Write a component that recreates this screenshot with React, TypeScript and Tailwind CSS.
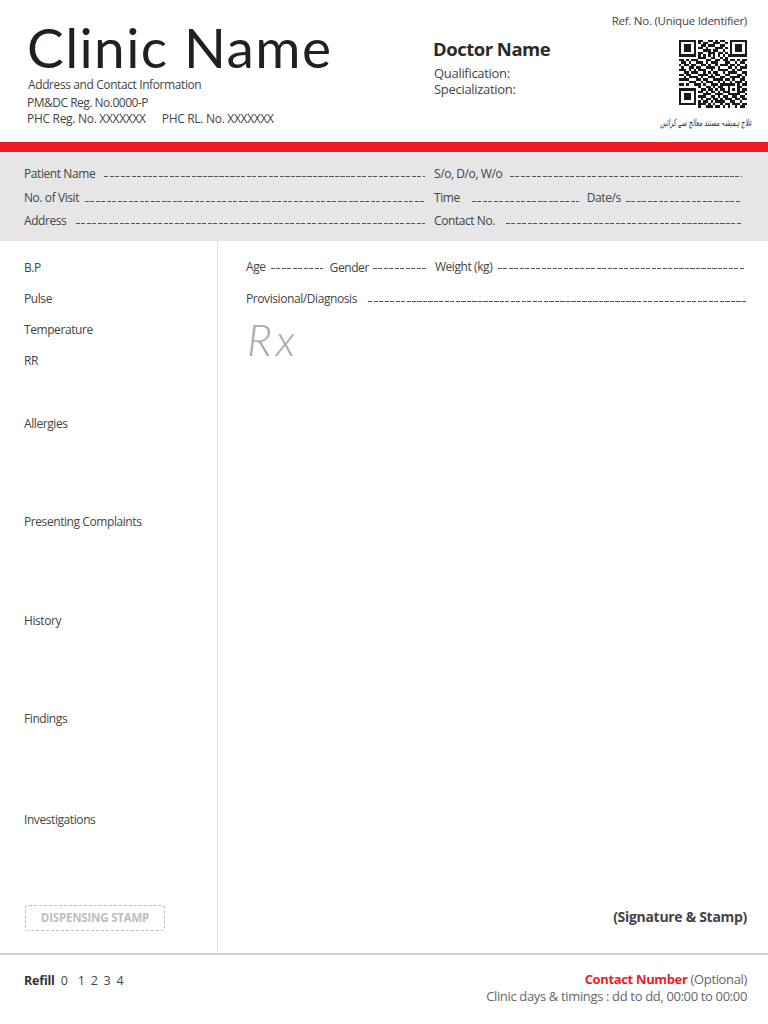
const QR = [
  "1111111011001101011001111111",
  "1000001010110011100101000001",
  "1011101001101110011001011101",
  "1011101011010001110101011101",
  "1011101000111011001001011101",
  "1000001011001110110101000001",
  "1111111010101010101011111111",
  "0000000011100110010100000000",
  "1101011100011001101101101011",
  "0110100111010111000110010110",
  "1011011001101001011101101001",
  "0100110110011110100011010111",
  "1110101011100100111100101100",
  "0011011100101011001011110011",
  "1101100011110101100110001101",
  "0010111101001110011001111010",
  "1111000110110011110110100110",
  "0000111001011100101001011101",
  "1101001110100111011111101011",
  "0000000010011010110010001100",
  "1111111001101101011010101011",
  "1000001011010110101110001110",
  "1011101000111001110011111001",
  "1011101011100110101100110110",
  "1011101001011011010111011011",
  "1000001010110101111001100100",
  "1111111011101010010110111011",
  "0000000010011101101010010110",
];

function QrCode() {
  return (
    <svg width="68" height="69" viewBox="0 0 28 28" shapeRendering="crispEdges" className="block">
      {QR.map((row, y) =>
        row.split("").map((c, x) =>
          c === "1" ? <rect key={`${x}-${y}`} x={x} y={y} width="1" height="1" fill="#1a1a1a" /> : null,
        ),
      )}
    </svg>
  );
}

function Line({ className = "" }: { className?: string }) {
  return (
    <div className={`h-px bg-[repeating-linear-gradient(90deg,#555_0,#555_4px,transparent_4px,transparent_5.5px)] ${className}`} />
  );
}

function Label({ children, className = "" }: { children: React.ReactNode; className?: string }) {
  return <span className={`text-[12px] leading-[16px] tracking-[-0.42px] text-[#444] whitespace-nowrap ${className}`}>{children}</span>;
}

export default function App() {
  return (
    <div className="w-[768px] h-[1024px] bg-white flex flex-col font-['Open_Sans','Liberation_Sans',sans-serif] overflow-hidden">
      {/* header */}
      <header className="h-[142px] flex">
        <div className="w-[433px] pl-[27px] pt-[19px]">
          <div className="font-['Lato',sans-serif] font-normal text-[55px] leading-[56px] tracking-[1.4px] text-[#231f20]">Clinic Name</div>
          <div className="mt-[2px] pl-px text-[12px] leading-[16px] tracking-[-0.4px] text-[#444]">Address and Contact Information</div>
          <div className="mt-[2px] text-[12px] leading-[16px] tracking-[-0.5px] text-[#444]">PM&amp;DC Reg. No.0000-P</div>
          <div className="mt-px flex gap-[16px] text-[12px] leading-[14px] tracking-[-0.3px] text-[#444]">
            <span>PHC Reg. No. XXXXXXX</span>
            <span>PHC RL. No. XXXXXXX</span>
          </div>
        </div>
        <div className="flex-1 pt-[38px]">
          <div className="text-[18.5px] leading-[22px] font-bold tracking-[-0.5px] text-[#2b2b2b]">Doctor Name</div>
          <div className="mt-[5px] pl-px text-[13px] leading-[16px] tracking-[-0.3px] text-[#444]">Qualification:</div>
          <div className="pl-px text-[13px] leading-[16px] tracking-[-0.3px] text-[#444]">Specialization:</div>
        </div>
        <div className="w-[115px] pr-[21px] pt-[13px] flex flex-col items-end">
          <div className="-ml-[60px] text-[11.5px] leading-[15px] tracking-[-0.25px] text-[#444] whitespace-nowrap">Ref. No. (Unique Identifier)</div>
          <div className="mt-[11px]"><QrCode /></div>
          <div dir="rtl" className="mt-[8px] -mr-[5px] -ml-[40px] origin-right scale-x-[0.6] font-['DejaVu_Sans',sans-serif] text-[10px] leading-[14px] italic text-[#333] whitespace-nowrap">علاج ہمیشہ مستند معالج سے کرائیں</div>
        </div>
      </header>
      <div className="h-[10px] bg-[#ed1c24]" />

      {/* patient strip */}
      <section className="h-[89px] bg-[#e6e6e6] pl-[24px] pt-[14px] flex flex-col">
        <div className="h-[24px] flex">
          <div className="w-[402px] flex items-start">
            <Label>Patient Name</Label>
            <Line className="mt-[10px] ml-[9px] w-[321px]" />
          </div>
          <div className="ml-[8px] flex items-start">
            <Label>S/o, D/o, W/o</Label>
            <Line className="mt-[10px] ml-[8px] w-[232px]" />
          </div>
        </div>
        <div className="h-[23px] flex">
          <div className="w-[402px] flex items-start">
            <Label>No. of Visit</Label>
            <Line className="mt-[11px] ml-[6px] w-[342px]" />
          </div>
          <div className="ml-[8px] flex items-start">
            <Label>Time</Label>
            <Line className="mt-[11px] ml-[12px] w-[107px]" />
            <Label className="ml-[8px]">Date/s</Label>
            <Line className="mt-[11px] ml-[5px] w-[115px]" />
          </div>
        </div>
        <div className="h-[22px] flex">
          <div className="w-[402px] flex items-start">
            <Label>Address</Label>
            <Line className="mt-[10px] ml-[10px] w-[349px]" />
          </div>
          <div className="ml-[8px] flex items-start">
            <Label>Contact No.</Label>
            <Line className="mt-[10px] ml-[11px] w-[235px]" />
          </div>
        </div>
      </section>

      {/* body */}
      <main className="h-[712px] flex">
        <aside className="w-[218px] shrink-0 border-r border-[#e6e6e6] pl-[24px] flex flex-col">
          <Label className="mt-[19px]">B.P</Label>
          <Label className="mt-[15px]">Pulse</Label>
          <Label className="mt-[15px]">Temperature</Label>
          <Label className="mt-[15px]">RR</Label>
          <Label className="mt-[47px]">Allergies</Label>
          <Label className="mt-[82px]">Presenting Complaints</Label>
          <Label className="mt-[83px]">History</Label>
          <Label className="mt-[82px]">Findings</Label>
          <Label className="mt-[85px]">Investigations</Label>
          <div className="mt-[77px] ml-px w-[140px] h-[26px] rounded-[4px] border border-dashed border-[#bbb] flex items-center justify-center text-[11.5px] font-bold tracking-[-0.2px] text-[#bdbdbd]">DISPENSING STAMP</div>
        </aside>
        <div className="flex-1 flex flex-col pl-[28px] pr-[21px]">
          <div className="mt-[18px] flex items-start">
            <Label>Age</Label>
            <Line className="mt-[9px] ml-[5px] w-[52px]" />
            <Label className="ml-[7px] mt-px">Gender</Label>
            <Line className="mt-[9px] ml-[4px] w-[53px]" />
            <Label className="ml-[9px]">Weight (kg)</Label>
            <Line className="mt-[9px] ml-[6px] w-[247px]" />
          </div>
          <div className="mt-[15px] flex items-start">
            <Label>Provisional/Diagnosis</Label>
            <Line className="mt-[10px] ml-[11px] w-[379px]" />
          </div>
          <div className="mt-[8px] pl-px font-['Lato',sans-serif] font-light italic text-[44px] leading-[48px] tracking-[4px] text-[#aaa]">Rx</div>
          <div className="mt-auto mb-[27px] text-right text-[14px] leading-[18px] font-bold tracking-[-0.3px] text-[#444]">(Signature &amp; Stamp)</div>
        </div>
      </main>

      {/* footer */}
      <footer className="flex-1 border-t-2 border-[#d0d0d0] flex justify-between pl-[24px] pr-[21px] pt-[16px]">
        <div className="mt-px text-[12.5px] leading-[18px] text-[#444] tracking-[-0.2px]">
          <span className="font-bold text-[#333]">Refill</span>
          <span className="ml-[6px] inline-flex"><span>0</span><span className="ml-[10px]">1</span><span className="ml-[6px]">2</span><span className="ml-[6px]">3</span><span className="ml-[6px]">4</span></span>
        </div>
        <div className="text-right text-[13px] leading-[17px] tracking-[-0.35px] text-[#666]">
          <div><span className="font-bold text-[#ed1c24]">Contact Number</span> (Optional)</div>
          <div>Clinic days &amp; timings : dd to dd, 00:00 to 00:00</div>
        </div>
      </footer>
    </div>
  );
}
